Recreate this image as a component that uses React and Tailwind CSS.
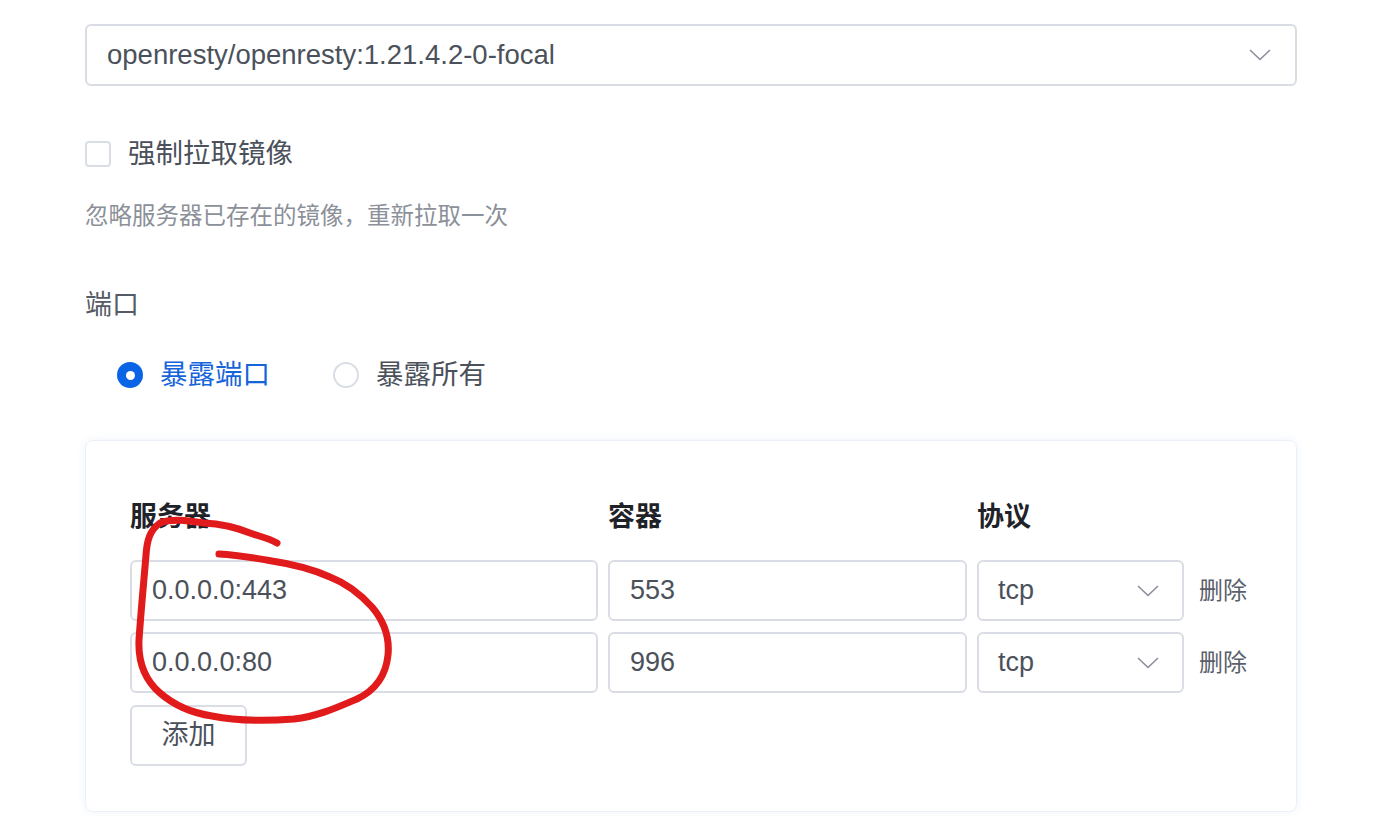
import React from 'react';

const font = { fontFamily: '"Liberation Sans", "Noto Sans CJK SC", sans-serif' };

function Chevron() {
  return (
    <svg width="22" height="12" viewBox="0 0 22 12" fill="none">
      <polyline points="1,1 11,10.5 21,1" stroke="#8a8f98" strokeWidth="1.6" />
    </svg>
  );
}

const rows = [
  { host: '0.0.0.0:443', container: '553', proto: 'tcp' },
  { host: '0.0.0.0:80', container: '996', proto: 'tcp' },
];

export default function App() {
  return (
    <div className="relative min-h-[816px] bg-white pl-[85px] pt-[24px] text-[#4b515b]" style={font}>
      <div className="w-[1212px]">
        <div className="flex h-[62px] items-center justify-between rounded-md border-2 border-[#d9dce5] pl-[20px] pr-[24px]">
          <span className="text-[27.5px] text-[#4b515b]">openresty/openresty:1.21.4.2-0-focal</span>
          <Chevron />
        </div>

        <label className="mt-[48px] flex h-[40px] items-center gap-[17px]">
          <span className="h-[26px] w-[26px] rounded-[4px] border-2 border-[#d9dde5] bg-white" />
          <span className="text-[27.5px] text-[#4b515b]">强制拉取镜像</span>
        </label>

        <p className="mt-[26px] text-[23.5px] leading-[32px] text-[#8b9099]">忽略服务器已存在的镜像，重新拉取一次</p>

        <p className="mt-[53px] text-[27px] leading-[40px] text-[#555b64]">端口</p>

        <div className="mt-[30px] flex h-[40px] items-center pl-[32px]">
          <span className="flex h-[26px] w-[26px] items-center justify-center rounded-full bg-[#0b63e5]">
            <span className="h-[9px] w-[9px] rounded-full bg-white" />
          </span>
          <span className="ml-[17px] text-[27.5px] text-[#1664d9]">暴露端口</span>
          <span className="ml-[63px] h-[26px] w-[26px] rounded-full border-2 border-[#d9dde5]" />
          <span className="ml-[17px] text-[27.5px] text-[#4b515b]">暴露所有</span>
        </div>

        <div className="mt-[45px] rounded-lg border border-[#ebf0f8] pb-[45px] pl-[44px] pt-[58px] shadow-[0_0_9px_rgba(40,100,220,0.08)]">
          <div className="grid grid-cols-[468px_359px_207px_auto] gap-x-[10px]">
            <span className="text-[27px] font-bold leading-[36px] text-[#1f2329]">服务器</span>
            <span className="text-[27px] font-bold leading-[36px] text-[#1f2329]">容器</span>
            <span className="text-[27px] font-bold leading-[36px] text-[#1f2329]">协议</span>
            <span />
          </div>

          <div className="mt-[25px] flex flex-col gap-[11px]">
            {rows.map((r) => (
              <div key={r.host} className="grid grid-cols-[468px_359px_207px_auto] items-center gap-x-[10px]">
                <div className="flex h-[61px] items-center rounded-md border-2 border-[#dadde5] pl-[20px] text-[27px]">{r.host}</div>
                <div className="flex h-[61px] items-center rounded-md border-2 border-[#dadde5] pl-[20px] text-[27px]">{r.container}</div>
                <div className="flex h-[61px] items-center justify-between rounded-md border-2 border-[#dadde5] pl-[19px] pr-[23px] text-[27px]">
                  {r.proto}
                  <Chevron />
                </div>
                <span className="ml-[5px] text-[24px] text-[#5a6069]">删除</span>
              </div>
            ))}
          </div>

          <button className="mt-[12px] h-[61px] w-[117px] rounded-md border-2 border-[#dadde5] text-[27px] text-[#4b515b]">添加</button>
        </div>
      </div>

      <svg className="pointer-events-none absolute left-0 top-0" width="1380" height="816" fill="none">
        <path
          d="M277,543 C268,538 258,536 250,533 C240,529 225,524 204,523 C190,521 172,518 160,523 C150,530 147,540 146,555 C144,580 141,610 139,640 C138,662 145,680 160,693 C175,706 192,713 212,716 C237,721 267,721 294,719 C320,716 340,706 357,699 C376,690 386,675 388,655 C390,635 383,620 372,607 C362,596 348,584 330,577 C312,569 292,564 272,561 C255,558 236,555 219,554"
          stroke="#e11b1b"
          strokeWidth="7"
          strokeLinecap="round"
          strokeLinejoin="round"
        />
      </svg>
    </div>
  );
}
